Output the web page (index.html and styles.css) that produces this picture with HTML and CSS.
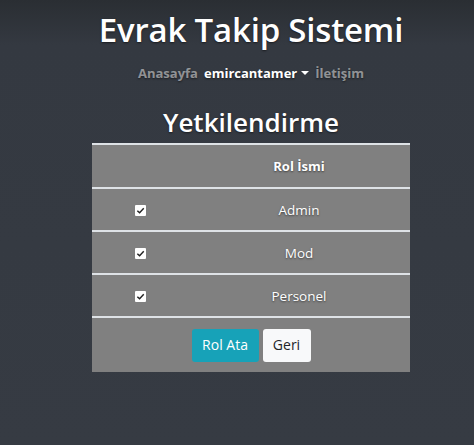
FILE: index.html
```html
<!DOCTYPE html>
<html lang="tr">
<head>
<meta charset="utf-8">
<title>Yetkilendirme</title>
<link rel="stylesheet" href="styles.css">
</head>
<body>
<div class="page">
  <header class="masthead">
    <h1 class="brand">Evrak Takip Sistemi</h1>
    <nav class="nav">
      <a class="nav-link">Anasayfa</a>
      <a class="nav-link active">emircantamer<span class="caret"></span></a>
      <a class="nav-link">İletişim</a>
    </nav>
  </header>
  <main class="content">
    <h2 class="title">Yetkilendirme</h2>
    <table class="roles">
      <thead>
        <tr><th class="col-check"></th><th class="col-name">Rol İsmi</th></tr>
      </thead>
      <tbody>
        <tr><td class="col-check"><span class="check"><svg viewBox="0 0 10 10" width="9" height="9"><path d="M1.5 5.2 L4 7.5 L8.6 2.6" fill="none" stroke="#222" stroke-width="1.6"/></svg></span></td><td class="col-name">Admin</td></tr>
        <tr><td class="col-check"><span class="check"><svg viewBox="0 0 10 10" width="9" height="9"><path d="M1.5 5.2 L4 7.5 L8.6 2.6" fill="none" stroke="#222" stroke-width="1.6"/></svg></span></td><td class="col-name">Mod</td></tr>
        <tr><td class="col-check"><span class="check"><svg viewBox="0 0 10 10" width="9" height="9"><path d="M1.5 5.2 L4 7.5 L8.6 2.6" fill="none" stroke="#222" stroke-width="1.6"/></svg></span></td><td class="col-name">Personel</td></tr>
        <tr class="foot"><td colspan="2"><div class="actions"><button class="btn btn-info">Rol Ata</button><button class="btn btn-light">Geri</button></div></td></tr>
      </tbody>
    </table>
  </main>
</div>
</body>
</html>
```
FILE: styles.css
```css
html, body {
  margin: 0;
  padding: 0;
  height: 100%;
}
body {
  background: linear-gradient(#2a2e33 0px, #343941 45px, #363b43 100%);
  font-family: "Open Sans", "Noto Sans", sans-serif;
  color: #fff;
  text-shadow: 0 1px 2px rgba(0,0,0,0.5);
}
.page {
  width: 318px;
  margin-left: 92px;
  display: flex;
  flex-direction: column;
  align-items: center;
}
.masthead {
  display: flex;
  flex-direction: column;
  align-items: center;
}
.brand {
  margin: 8px 0 0;
  font-size: 33px;
  font-weight: 600;
  line-height: 44px;
  letter-spacing: -0.2px;
  white-space: nowrap;
}
.nav {
  display: flex;
  gap: 6px;
  margin-top: 12px;
  font-size: 13px;
  font-weight: 700;
  line-height: 18px;
}
.nav-link {
  color: rgba(255,255,255,0.5);
}
.nav-link.active {
  color: #fff;
}
.caret {
  display: inline-block;
  margin-left: 4px;
  vertical-align: 3px;
  border-top: 4px solid #fff;
  border-left: 4px solid transparent;
  border-right: 4px solid transparent;
}
.content {
  width: 100%;
  display: flex;
  flex-direction: column;
  align-items: center;
}
.title {
  margin: 24px 0 0;
  font-size: 26px;
  font-weight: 600;
  line-height: 32px;
}
.roles {
  width: 318px;
  margin-top: 5px;
  border-collapse: collapse;
  background: #808080;
  font-size: 13.5px;
}
.roles th, .roles td {
  border-top: 2px solid #dee2e6;
  height: 41px;
  padding: 0;
  text-align: center;
  vertical-align: middle;
}
.roles th {
  height: 42px;
  font-weight: 700;
  font-size: 13px;
}
.col-check {
  width: 96px;
}
.check {
  display: inline-flex;
  width: 11px;
  height: 11px;
  background: #fff;
  border-radius: 1px;
  align-items: center;
  justify-content: center;
  vertical-align: middle;
}
.check svg { display: block; }
.roles .foot td {
  height: 54px;
}
.actions {
  display: flex;
  justify-content: center;
  gap: 4px;
}
.btn {
  font-family: inherit;
  font-size: 14px;
  line-height: 20px;
  height: 33px;
  padding: 0;
  white-space: nowrap;
  border: 1px solid transparent;
  border-radius: 3px;
  text-shadow: none;
}
.btn-info {
  background: #17a2b8;
  color: #fff;
  width: 67px;
}
.btn-light {
  background: #f8f9fa;
  color: #212529;
  width: 48px;
}
```
